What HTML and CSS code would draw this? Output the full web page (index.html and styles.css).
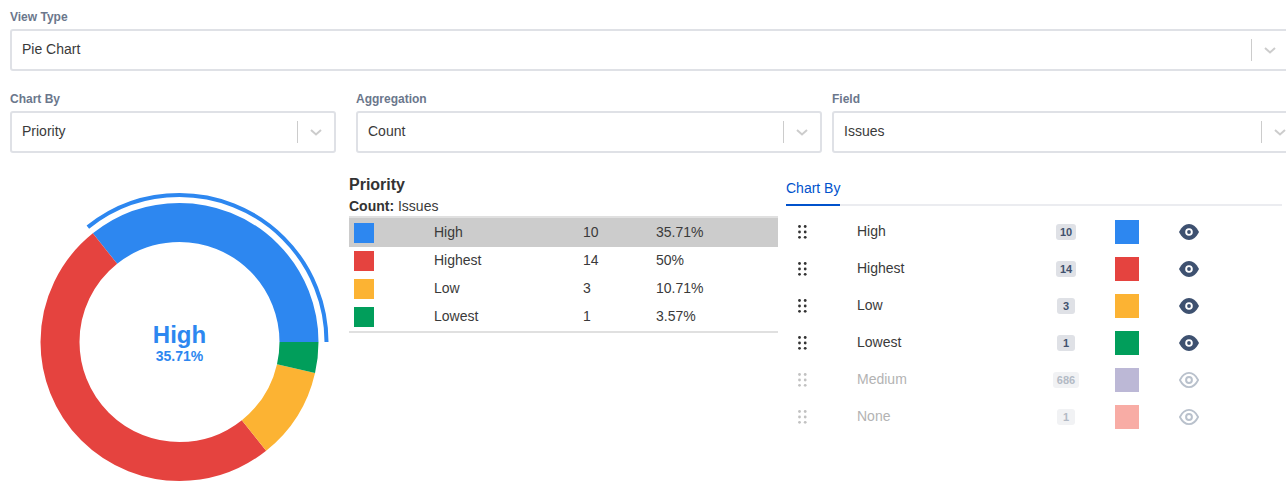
FILE: index.html
```html
<!DOCTYPE html>
<html lang="en">
  <head>
    <meta charset="UTF-8" />
    <title>Pie Chart</title>
    <link rel="stylesheet" href="styles.css">
  </head>
  <body>
    <svg class="defs" width="0" height="0">
      <symbol id="grip" viewBox="0 0 9 14">
        <circle cx="1.5" cy="1.5" r="1.4" /><circle cx="7.2" cy="1.5" r="1.4" />
        <circle cx="1.5" cy="7" r="1.4" /><circle cx="7.2" cy="7" r="1.4" />
        <circle cx="1.5" cy="12.3" r="1.4" /><circle cx="7.2" cy="12.3" r="1.4" />
      </symbol>
      <symbol id="eye" viewBox="0 0 20 16">
        <path d="M0 8C2.6 2.8 6 0 10 0s7.4 2.8 10 8c-2.6 5.2-6 8-10 8S2.6 13.200 0 8z" fill="currentColor" />
        <circle cx="10" cy="8" r="3.800" fill="#fff" />
        <circle cx="10" cy="8" r="1.900" fill="currentColor" />
      </symbol>
      <symbol id="eye-off" viewBox="0 0 20 16">
        <path d="M.9 8C3.300 3.100 6.400.9 10 .9s6.700 2.200 9.100 7.100c-2.400 4.900-5.500 7.100-9.100 7.100S3.300 12.900.9 8z" fill="none" stroke="currentColor" stroke-width="1.800" />
        <circle cx="10" cy="8" r="2.900" fill="none" stroke="currentColor" stroke-width="2" />
      </symbol>
      <symbol id="chevron" viewBox="0 0 12 7">
        <path d="M1 1l5 4.500L11 1" fill="none" stroke="currentColor" stroke-width="2" />
      </symbol>
    </svg>

    <div class="field">
      <label class="field-label">View Type</label>
      <div class="select">
        <span class="select-value">Pie Chart</span>
        <span class="select-sep"></span>
        <svg class="select-arrow"><use href="#chevron" /></svg>
      </div>
    </div>

    <div class="field-row">
      <div class="field">
        <label class="field-label">Chart By</label>
        <div class="select">
          <span class="select-value">Priority</span>
          <span class="select-sep"></span>
          <svg class="select-arrow"><use href="#chevron" /></svg>
        </div>
      </div>
      <div class="field">
        <label class="field-label">Aggregation</label>
        <div class="select">
          <span class="select-value">Count</span>
          <span class="select-sep"></span>
          <svg class="select-arrow"><use href="#chevron" /></svg>
        </div>
      </div>
      <div class="field">
        <label class="field-label">Field</label>
        <div class="select">
          <span class="select-value">Issues</span>
          <span class="select-sep"></span>
          <svg class="select-arrow"><use href="#chevron" /></svg>
        </div>
      </div>
    </div>

    <div class="chart-area">
      <svg class="pie" width="339" height="325" viewBox="0 0 339 325">
        <g transform="translate(169.500 172) scale(1 -1)" fill="none">
          <circle r="119.500" stroke="#2d87f0" stroke-width="39" pathLength="28" stroke-dasharray="10 18" />
          <circle r="119.500" stroke="#e5433f" stroke-width="39" pathLength="28" stroke-dasharray="14 14" stroke-dashoffset="-10" />
          <circle r="119.500" stroke="#fcb333" stroke-width="39" pathLength="28" stroke-dasharray="3 25" stroke-dashoffset="-24" />
          <circle r="119.500" stroke="#019e5b" stroke-width="39" pathLength="28" stroke-dasharray="1 27" stroke-dashoffset="-27" />
          <circle r="147" stroke="#2d87f0" stroke-width="4" pathLength="28" stroke-dasharray="10 18" />
        </g>
        <text class="pie-name" x="169.500" y="173" text-anchor="middle">High</text>
        <text class="pie-value" x="169.500" y="191" text-anchor="middle">35.71%</text>
      </svg>

      <div class="legend">
        <h3 class="legend-title">Priority</h3>
        <div class="legend-sub"><b>Count:</b> Issues</div>
        <table class="legend-table">
          <tr class="active">
            <td class="col-swatch"><span class="swatch blue"></span></td>
            <td class="col-name">High</td>
            <td class="col-count">10</td>
            <td>35.71%</td>
          </tr>
          <tr>
            <td class="col-swatch"><span class="swatch red"></span></td>
            <td class="col-name">Highest</td>
            <td class="col-count">14</td>
            <td>50%</td>
          </tr>
          <tr>
            <td class="col-swatch"><span class="swatch yellow"></span></td>
            <td class="col-name">Low</td>
            <td class="col-count">3</td>
            <td>10.71%</td>
          </tr>
          <tr>
            <td class="col-swatch"><span class="swatch green"></span></td>
            <td class="col-name">Lowest</td>
            <td class="col-count">1</td>
            <td>3.57%</td>
          </tr>
        </table>
      </div>

      <div class="panel">
        <div class="tabs"><span class="tab">Chart By</span></div>
        <ul class="series">
          <li class="series-row">
            <svg class="grip"><use href="#grip" /></svg>
            <span class="series-name">High</span>
            <span class="badge-cell"><span class="badge">10</span></span>
            <span class="chip blue"></span>
            <svg class="eye"><use href="#eye" /></svg>
          </li>
          <li class="series-row">
            <svg class="grip"><use href="#grip" /></svg>
            <span class="series-name">Highest</span>
            <span class="badge-cell"><span class="badge">14</span></span>
            <span class="chip red"></span>
            <svg class="eye"><use href="#eye" /></svg>
          </li>
          <li class="series-row">
            <svg class="grip"><use href="#grip" /></svg>
            <span class="series-name">Low</span>
            <span class="badge-cell"><span class="badge">3</span></span>
            <span class="chip yellow"></span>
            <svg class="eye"><use href="#eye" /></svg>
          </li>
          <li class="series-row">
            <svg class="grip"><use href="#grip" /></svg>
            <span class="series-name">Lowest</span>
            <span class="badge-cell"><span class="badge">1</span></span>
            <span class="chip green"></span>
            <svg class="eye"><use href="#eye" /></svg>
          </li>
          <li class="series-row off">
            <svg class="grip"><use href="#grip" /></svg>
            <span class="series-name">Medium</span>
            <span class="badge-cell"><span class="badge">686</span></span>
            <span class="chip lilac"></span>
            <svg class="eye"><use href="#eye-off" /></svg>
          </li>
          <li class="series-row off">
            <svg class="grip"><use href="#grip" /></svg>
            <span class="series-name">None</span>
            <span class="badge-cell"><span class="badge">1</span></span>
            <span class="chip pink"></span>
            <svg class="eye"><use href="#eye-off" /></svg>
          </li>
        </ul>
      </div>
    </div>
  </body>
</html>
```

FILE: styles.css
```css
html {
  overflow: hidden;
}

body {
  margin: 0;
  width: 1280px;
  height: 495px;
  padding: 9px 0 0 10px;
  overflow: hidden;
  background: #fff;
  font-family: 'Liberation Sans', Arial, sans-serif;
  font-size: 14px;
  color: #3a3a3a;
}

.defs {
  position: absolute;
}

.field-label {
  display: block;
  height: 16px;
  margin-bottom: 4px;
  font-size: 12px;
  line-height: 16px;
  font-weight: bold;
  color: #6b778c;
}

.select {
  display: flex;
  align-items: center;
  height: 42px;
  box-sizing: border-box;
  padding-left: 10px;
  border: 2px solid #dfe1e6;
  border-radius: 3px;
}
.select-value {
  flex: 1;
  margin-bottom: 2px;
}
.select-sep {
  width: 1px;
  height: 22px;
  background: #ccc;
}
.select-arrow {
  width: 12px;
  height: 7px;
  margin: 1px 12px 0;
  color: #ccc;
}

.field-row {
  display: grid;
  grid-template-columns: 326px 466px 458px;
  column-gap: 20px;
  margin-top: 20px;
}
.field-row .field:last-child {
  margin-left: -10px;
}

.chart-area {
  display: flex;
  margin-top: 17px;
}
.pie {
  flex: none;
}
.pie-name {
  font-size: 24px;
  font-weight: bold;
  fill: #2d87f0;
}
.pie-value {
  font-size: 14px;
  font-weight: bold;
  fill: #2d87f0;
}

.legend {
  width: 429px;
  flex: none;
}
.legend-title {
  margin: 5px 0 0;
  font-size: 16px;
  line-height: 20px;
  color: #333;
}
.legend-sub {
  margin-top: 1px;
  line-height: 20px;
}
.legend-sub b {
  color: #333;
}
.legend-table {
  width: 100%;
  border-collapse: separate;
  border-spacing: 0;
  border-top: 2px solid #e0e0e0;
  border-bottom: 2px solid #e0e0e0;
}
.legend-table td {
  box-sizing: border-box;
  height: 28px;
  padding: 0 0 2px;
}
.legend-table .col-swatch {
  padding: 0;
}
.legend-table .active td {
  height: 29px;
}
.legend-table .active .col-swatch {
  padding-top: 1px;
}
.legend-table .active {
  background: #ccc;
}
.col-swatch {
  width: 85px;
}
.col-name {
  width: 149px;
}
.col-count {
  width: 73px;
}

.swatch {
  display: block;
  width: 20px;
  height: 20px;
  margin-left: 5px;
}
.blue { background: #2d87f0; }
.red { background: #e5433f; }
.yellow { background: #fcb333; }
.green { background: #019e5b; }
.lilac { background: #bcb8d6; }
.pink { background: #f8aca5; }

.panel {
  width: 496px;
  margin-left: 8px;
}
.tabs {
  display: flex;
  margin-top: 8px;
  border-bottom: 2px solid #ebecf0;
}
.tab {
  margin-bottom: -2px;
  padding-bottom: 6px;
  line-height: 20px;
  color: #0052cc;
  border-bottom: 2px solid #0052cc;
}

.series {
  margin: 7px 0 0;
  padding: 0;
  list-style-type: none;
}
.series-row {
  display: grid;
  grid-template-columns: 71px 170px 88px 24px 100px;
  align-items: center;
  height: 37px;
}
.series-name {
  margin-bottom: 2px;
}
.grip {
  width: 9px;
  height: 14px;
  margin-left: 12px;
  fill: #333;
}
.badge-cell {
  display: flex;
  justify-content: center;
  margin-right: 10px;
}
.badge {
  min-width: 10px;
  padding: 0 4px;
  border-radius: 3px;
  background: #dfe1e6;
  color: #42526e;
  font-size: 11px;
  line-height: 16px;
  font-weight: bold;
  text-align: center;
}
.chip {
  display: block;
  width: 24px;
  height: 24px;
}
.eye {
  width: 20px;
  height: 16px;
  justify-self: center;
  color: #3e5170;
}

.off {
  color: #b3b3b3;
}
.off .grip {
  fill: #c2c2c2;
}
.off .badge {
  background: #f1f2f4;
  color: #b3bac5;
}
.off .eye {
  color: #b9c1cc;
}
```
